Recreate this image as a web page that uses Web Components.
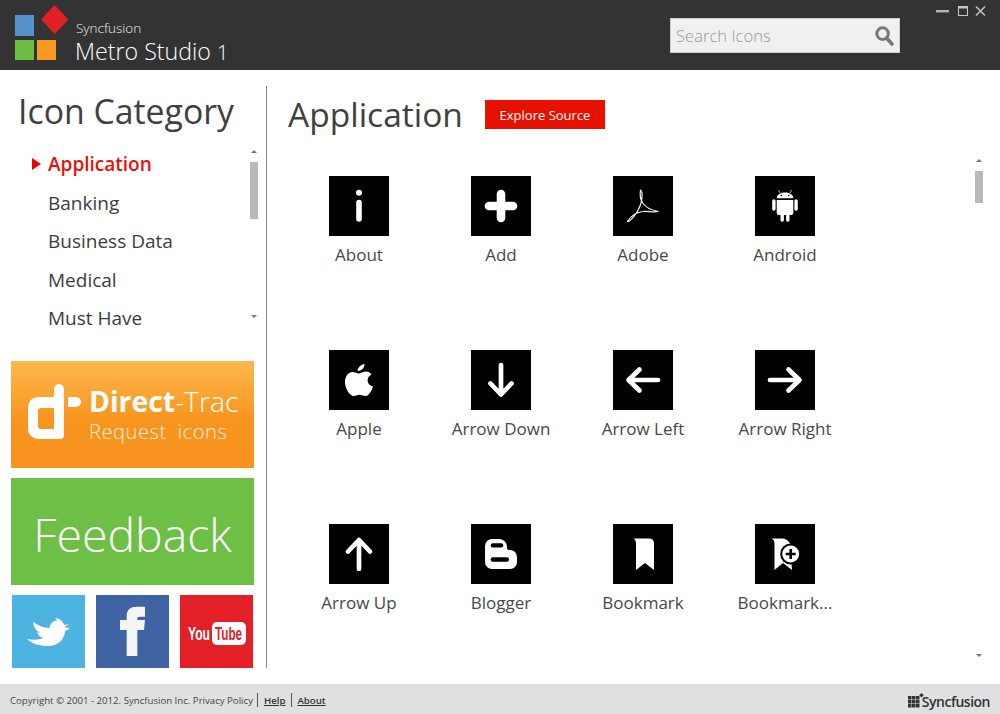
<!DOCTYPE html>
<html>
<head>
<meta charset="utf-8">
<title>Metro Studio</title>
<style>
  html, body { margin: 0; padding: 0; background: #fff; }
  body { font-family: "Open Sans", "Noto Sans", sans-serif; color: #3c3c3c; }
</style>
</head>
<body>
<metro-app></metro-app>

<script>
class VScroll extends HTMLElement {
  connectedCallback() {
    const root = this.shadowRoot || this.attachShadow({ mode: "open" });
    const top = this.getAttribute("thumb-top") || 0;
    const size = this.getAttribute("thumb-size") || 40;
    root.innerHTML = `
      <style>
        :host { display: flex; flex-direction: column; width: 8px; align-items: center; justify-content: space-between; }
        .up, .down { width: 0; height: 0; border-left: 3px solid transparent; border-right: 3px solid transparent; }
        .up { border-bottom: 3px solid #777; }
        .down { border-top: 3px solid #777; }
        .track { flex: 1; width: 8px; }
        .thumb { width: 8px; background: #b9b9b9; margin-top: ${top}px; height: ${size}px; }
      </style>
      <div class="up"></div>
      <div class="track"><div class="thumb"></div></div>
      <div class="down"></div>
    `;
  }
}

class WindowControls extends HTMLElement {
  connectedCallback() {
    const root = this.shadowRoot || this.attachShadow({ mode: "open" });
    root.innerHTML = `
      <style>
        :host { display: block; line-height: 0; }
      </style>
      <svg width="52" height="14" viewBox="0 0 52 14">
        <rect x="0" y="5" width="13" height="2.4" fill="#b5b5b5"/>
        <rect x="22.5" y="1.5" width="9" height="9" fill="none" stroke="#c8c8c8" stroke-width="1"/>
        <rect x="22" y="1" width="10" height="2.5" fill="#c8c8c8"/>
        <path d="M40 1.5 L49 10.5 M49 1.5 L40 10.5" stroke="#c0c0c0" stroke-width="1.6" fill="none"/>
      </svg>
    `;
  }
}

class SearchBox extends HTMLElement {
  connectedCallback() {
    const root = this.shadowRoot || this.attachShadow({ mode: "open" });
    root.innerHTML = `
      <style>
        :host { display: flex; align-items: center; justify-content: space-between; box-sizing: border-box; width: 230px; height: 35px; background: #f0f0f0; border: 1px solid #cfcfcf; padding: 0 5px 0 5px; }
        span { font-size: 16.6px; font-weight: 300; color: #9a9a9a; }
        svg { display: block; }
      </style>
      <span>Search Icons</span>
      <svg width="19" height="20" viewBox="0 0 19 20">
        <circle cx="7.6" cy="7.6" r="5.8" fill="none" stroke="#777" stroke-width="3"/>
        <path d="M11.6 12 L17 18" stroke="#777" stroke-width="3.6" stroke-linecap="round"/>
      </svg>
    `;
  }
}

class AppHeader extends HTMLElement {
  connectedCallback() {
    const root = this.shadowRoot || this.attachShadow({ mode: "open" });
    root.innerHTML = `
      <style>
        :host { display: flex; height: 70px; background: #333; color: #fff; position: relative; }
        .logo { display: block; margin: 5px 0 0 15px; flex: none; }
        .brand { margin-left: 6px; display: flex; flex-direction: column; padding-top: 19px; }
        .company { font-size: 13.5px; line-height: 18px; color: #eee; font-weight: 300; padding-left: 1px; }
        .product { font-size: 23.2px; line-height: 28px; font-weight: 300; white-space: nowrap; }
        .product small { font-size: 20px; }
        .spacer { flex: 1; }
        search-box { margin: 18px 100px 0 0; }
        window-controls { position: absolute; top: 5px; right: 12px; }
      </style>
      <svg class="logo" width="54" height="56" viewBox="15 5 54 56">
        <rect x="15" y="15" width="19" height="21" fill="#5591cd"/>
        <rect x="15" y="40" width="19" height="20" fill="#6fbe44"/>
        <rect x="37" y="40" width="19" height="20" fill="#f59b23"/>
        <path d="M54.5 5 L68.5 19.5 L54.5 34 L41 19.5 Z" fill="#e21f26"/>
      </svg>
      <div class="brand">
        <div class="company">Syncfusion</div>
        <div class="product">Metro Studio <small>1</small></div>
      </div>
      <div class="spacer"></div>
      <search-box></search-box>
      <window-controls></window-controls>
    `;
  }
}

class CategoryList extends HTMLElement {
  connectedCallback() {
    const root = this.shadowRoot || this.attachShadow({ mode: "open" });
    const items = ["Application", "Banking", "Business Data", "Medical", "Must Have"];
    root.innerHTML = `
      <style>
        :host { display: flex; height: 180px; overflow: hidden; }
        ul { list-style: none; margin: 0; padding: 0 0 0 48px; flex: 1; }
        li { height: 38.5px; line-height: 38.5px; font-size: 19px; position: relative; color: #3c3c3c; white-space: nowrap; }
        li.on { color: #e8100c; font-weight: 600; }
        li.on::before { content: ""; position: absolute; left: -16px; top: 13px; border-left: 9px solid #f00000; border-top: 6px solid transparent; border-bottom: 6px solid transparent; }
        v-scroll { margin: 5px 8px 7px 0; }
      </style>
      <ul>${items.map((t, i) => `<li class="${i === 0 ? "on" : ""}">${t}</li>`).join("")}</ul>
      <v-scroll thumb-top="9" thumb-size="57"></v-scroll>
    `;
  }
}

class DirectTrac extends HTMLElement {
  connectedCallback() {
    const root = this.shadowRoot || this.attachShadow({ mode: "open" });
    root.innerHTML = `
      <style>
        :host { display: flex; align-items: center; height: 107px; background: linear-gradient(#fdb94c, #f8951f 55%, #f7931e); color: #fff; }
        svg { display: block; margin: -6px 0 0 17px; flex: none; }
        .txt { margin: -2px 0 0 8px; }
        .big { font-size: 28.3px; line-height: 36px; font-weight: 700; white-space: nowrap; }
        .big span { font-weight: 300; }
        .sub { font-size: 20.2px; line-height: 25px; font-weight: 300; letter-spacing: .5px; word-spacing: 5px; opacity: .85; white-space: nowrap; }
      </style>
      <svg width="53" height="55" viewBox="0 0 53 55">
        <path d="M26 5 a5 5 0 0 1 10 0 V51 a4 4 0 0 1 -4 4 H10 A10 10 0 0 1 0 45 V23 A10 10 0 0 1 10 13 H26 Z M26 24 H13 a3 3 0 0 0 -3 3 V42 a3 3 0 0 0 3 3 H26 Z" fill="#fff" fill-rule="evenodd"/>
        <path d="M40 13 H48 a5 5 0 0 1 0 10 H40 Z" fill="#fff"/>
      </svg>
      <div class="txt">
        <div class="big">Direct<span>-Trac</span></div>
        <div class="sub">Request icons</div>
      </div>
    `;
  }
}

class FeedbackBanner extends HTMLElement {
  connectedCallback() {
    const root = this.shadowRoot || this.attachShadow({ mode: "open" });
    root.innerHTML = `
      <style>
        :host { display: flex; align-items: center; justify-content: center; box-sizing: border-box; height: 107px; padding-top: 5px; background: #6ebf45; color: #fff; font-size: 46.4px; font-weight: 300; }
      </style>
      Feedback
    `;
  }
}

class SocialLinks extends HTMLElement {
  connectedCallback() {
    const root = this.shadowRoot || this.attachShadow({ mode: "open" });
    root.innerHTML = `
      <style>
        :host { display: flex; gap: 11px; padding-left: 1px; }
        svg { display: block; }
      </style>
      <svg width="73" height="73" viewBox="0 0 73 73">
        <rect width="73" height="73" fill="#4db3e1"/>
        <path d="M58 33.5 L52.500 32 L57 29 L52 30 C51 26 47 23 43 23 L45.500 25.500 C41 25 38 29 37.500 33 C31 33 26 30 21 27 C21.500 32 24 36 28 37.500 L25 37.500 C26 40 28 42 31 43 C27 45 21 45 15 44 C21 49 27 51 36 51 C47 51 53 43 53 36 Z" fill="#fff"/>
      </svg>
      <svg width="73" height="73" viewBox="0 0 73 73">
        <rect width="73" height="73" fill="#4064a3"/>
        <path d="M30.7 61 V35 H24 V25 H30.7 V21 C30.7 15 34 11.7 41 11.7 H49 V21.7 H44 C42 21.7 41.3 22.5 41.3 24 V25 H49 L48 35 H41.3 V61 Z" fill="#f4f4f6"/>
      </svg>
      <svg width="73" height="73" viewBox="0 0 73 73">
        <rect width="73" height="73" fill="#e32025"/>
        <text transform="translate(8 45) scale(.64 1)" font-family="Liberation Sans" font-weight="700" font-size="19" fill="#fff">You</text>
        <rect x="32" y="27" width="34" height="23" rx="5" fill="#fff"/>
        <text transform="translate(35 45) scale(.617 1)" font-family="Liberation Sans" font-weight="700" font-size="19" fill="#e32025">Tube</text>
      </svg>
    `;
  }
}

class SidePanel extends HTMLElement {
  connectedCallback() {
    const root = this.shadowRoot || this.attachShadow({ mode: "open" });
    root.innerHTML = `
      <style>
        :host { display: flex; flex-direction: column; flex: none; box-sizing: border-box; width: 267px; border-right: 1px solid #8a8a8a; }
        h1 { margin: -1px 0 8px 18px; font-size: 33.8px; line-height: 52px; font-weight: 400; color: #404040; white-space: nowrap; }
        .banners { display: flex; flex-direction: column; gap: 10px; margin: 36px 12px 0 11px; }
      </style>
      <h1>Icon Category</h1>
      <category-list></category-list>
      <div class="banners">
        <direct-trac></direct-trac>
        <feedback-banner></feedback-banner>
        <social-links></social-links>
      </div>
    `;
  }
}

class IconTile extends HTMLElement {
  connectedCallback() {
    const root = this.shadowRoot || this.attachShadow({ mode: "open" });
    root.innerHTML = `
      <style>
        :host { display: flex; flex-direction: column; align-items: center; height: 100px; }
        .box { width: 60px; height: 60px; background: #000; flex: none; }
        ::slotted(svg) { display: block; width: 60px; height: 60px; }
        .label { margin-top: 7px; font-size: 17px; line-height: 24px; color: #484848; white-space: nowrap; }
      </style>
      <div class="box"><slot></slot></div>
      <div class="label">${this.getAttribute("label") || ""}</div>
    `;
  }
}

class IconGrid extends HTMLElement {
  connectedCallback() {
    const root = this.shadowRoot || this.attachShadow({ mode: "open" });
    root.innerHTML = `
      <style>
        :host { display: grid; grid-template-columns: repeat(4, 142px); row-gap: 74px; align-content: start; margin-top: 32px; }
      </style>
      <slot></slot>
    `;
  }
}

class ContentPanel extends HTMLElement {
  connectedCallback() {
    const root = this.shadowRoot || this.attachShadow({ mode: "open" });
    root.innerHTML = `
      <style>
        :host { display: flex; flex-direction: column; flex: 1; min-width: 0; padding-left: 21px; }
        .head { display: flex; align-items: center; height: 58px; flex: none; }
        h2 { margin: -2px 0 0; font-size: 33.5px; font-weight: 400; line-height: 58px; color: #404040; width: 197px; white-space: nowrap; }
        button { width: 120px; height: 29px; margin-top: -1px; border: 0; padding: 0; background: #e81100; color: #fff; font: 400 13px "Open Sans", sans-serif; }
        .body { display: flex; justify-content: space-between; flex: 1; min-height: 0; }
        v-scroll { height: 498px; margin: 15px 17px 0 0; }
      </style>
      <div class="head">
        <h2>Application</h2>
        <button>Explore Source</button>
      </div>
      <div class="body">
        <icon-grid><slot></slot></icon-grid>
        <v-scroll thumb-top="9" thumb-size="32"></v-scroll>
      </div>
    `;
  }
}

class AppFooter extends HTMLElement {
  connectedCallback() {
    const root = this.shadowRoot || this.attachShadow({ mode: "open" });
    root.innerHTML = `
      <style>
        :host { display: flex; align-items: center; justify-content: space-between; box-sizing: border-box; height: 30px; flex: none; background: #e0e0e0; padding: 2px 10px 0 10px; font-size: 9.65px; color: #444; }
        .links { display: flex; align-items: center; white-space: nowrap; }
        a { color: #333; text-decoration: underline; font-weight: 600; padding: 0 5.5px; }
        .sep { width: 1px; height: 14px; background: #555; }
        .first { margin-left: 4.5px; }
        .logo { display: flex; align-items: flex-end; margin-top: 1px; }
        .logo svg { display: block; margin-right: -2px; margin-bottom: 1px; }
        .logo span { font-size: 14px; line-height: 14px; font-weight: 600; color: #333; letter-spacing: -.5px; }
      </style>
      <div class="links">
        <span>Copyright © 2001 - 2012. Syncfusion Inc. Privacy Policy</span>
        <span class="sep first"></span><a>Help</a><span class="sep"></span><a>About</a>
      </div>
      <div class="logo">
        <svg width="16" height="15" viewBox="0 0 16 15">
          <path d="M0 3h3.500v3.500H0zM4 3h3.500v3.500H4zM8 3h3.500v3.500H8zM0 7h3.500v3.500H0zM4 7h3.500v3.500H4zM8 7h3.500v3.500H8zM0 11h3.500v3.500H0zM4 11h3.500v3.500H4zM8 11h3.500v3.500H8z" fill="#333"/>
          <path d="M13.500 0 L15.800 2.300 L13.500 4.600 L11.200 2.300 Z" fill="#333"/>
        </svg>
        <span>Syncfusion</span>
      </div>
    `;
  }
}

class MetroApp extends HTMLElement {
  connectedCallback() {
    const root = this.shadowRoot || this.attachShadow({ mode: "open" });
    root.innerHTML = `
      <style>
        :host { display: flex; flex-direction: column; width: 1000px; height: 714px; overflow: hidden; }
        main { display: flex; flex: 1; min-height: 0; padding: 16px 0; }
      </style>
      <app-header></app-header>
      <main>
        <side-panel></side-panel>
        <content-panel>
          <icon-tile label="About"><svg viewBox="0 0 60 60"><circle cx="30" cy="16.7" r="3" fill="#fff"/><path d="M30 26.500V43" stroke="#fff" stroke-width="5.600" stroke-linecap="round"/></svg></icon-tile>
          <icon-tile label="Add"><svg viewBox="0 0 60 60"><path d="M30 18V42M18 30H42" stroke="#fff" stroke-width="8.600" stroke-linecap="round"/></svg></icon-tile>
          <icon-tile label="Adobe"><svg viewBox="0 0 60 60"><path d="M27.500 14 C26.500 20 27.500 24 30 27.500 C32.500 31 38 34 45.500 35.500 C41 36.500 34 35 30 35.500 C24 36 18 40 14.500 45.500 C15.500 47 21 41 24 36 C27 31 29.500 24 29 18 C29 16 28 14 27.500 14 Z" fill="none" stroke="#f2f2f2" stroke-width="1.200"/></svg></icon-tile>
          <icon-tile label="Android"><svg viewBox="0 0 60 60" fill="#fff"><path d="M21.700 22.300 C21.700 19 25 16.500 30 16.500 C35 16.500 38.300 19 38.300 22.300 Z"/><path d="M25 17 L23.500 14 M35 17 L36.500 14" stroke="#fff" stroke-width=".7"/><circle cx="26.300" cy="19.500" r=".8" fill="#000"/><circle cx="33.700" cy="19.500" r=".8" fill="#000"/><path d="M21.700 24 H38.300 V37 a2 2 0 0 1 -2 2 H34.500 V44 a1.700 1.700 0 0 1 -3.400 0 V39 H28.900 V44 a1.700 1.700 0 0 1 -3.400 0 V39 H23.700 a2 2 0 0 1 -2 -2 Z"/><rect x="17.200" y="23.300" width="3.400" height="11.400" rx="1.700"/><rect x="39.400" y="23.300" width="3.400" height="11.400" rx="1.700"/></svg></icon-tile>
          <icon-tile label="Apple"><svg viewBox="0 0 60 60" fill="#fff"><path d="M28.500 21 C29 17 32 14.500 35.500 14 C35.500 18 32.500 21 28.500 21 Z"/><path d="M23.500 22 C26 22 28 23.500 30 23.500 C32 23.500 34 21.600 37 21.600 C39.300 21.600 41.300 22.600 42.500 24.500 C39.800 26 38.600 28 38.600 30.400 C38.600 33.400 40.600 35.400 44 36.400 C42.600 41 39.500 46 36.500 46 C34.300 46 33 44.700 30.600 44.700 C28 44.700 27 46 24.800 46 C21 46 16 39 16 32 C16 26 19.500 22 23.500 22 Z"/></svg></icon-tile>
          <icon-tile label="Arrow Down"><svg viewBox="0 0 60 60"><path d="M30 15V44M19.500 33.500L30 44.500L40.500 33.500" fill="none" stroke="#fff" stroke-width="4.700" stroke-linecap="round" stroke-linejoin="round"/></svg></icon-tile>
          <icon-tile label="Arrow Left"><svg viewBox="0 0 60 60"><path d="M45 30H16M26.500 19.500L15.500 30L26.500 40.500" fill="none" stroke="#fff" stroke-width="4.700" stroke-linecap="round" stroke-linejoin="round"/></svg></icon-tile>
          <icon-tile label="Arrow Right"><svg viewBox="0 0 60 60"><path d="M15 30H44M33.500 19.500L44.500 30L33.500 40.500" fill="none" stroke="#fff" stroke-width="4.700" stroke-linecap="round" stroke-linejoin="round"/></svg></icon-tile>
          <icon-tile label="Arrow Up"><svg viewBox="0 0 60 60"><path d="M30 45V16.500M19 27.500L30 16L41 27.500" fill="none" stroke="#fff" stroke-width="4.700" stroke-linecap="round" stroke-linejoin="round"/></svg></icon-tile>
          <icon-tile label="Blogger"><svg viewBox="0 0 60 60"><path d="M21 15 H28 a8 8 0 0 1 8 8 v1 a2 2 0 0 0 2 2 H39 a7 7 0 0 1 7 7 v5 a7 7 0 0 1 -7 7 H21 a7 7 0 0 1 -7 -7 V22 a7 7 0 0 1 7 -7 Z" fill="#fff"/><rect x="19.700" y="19.300" width="12.600" height="4.200" rx="2.100" fill="#000"/><rect x="19.700" y="33.300" width="18.300" height="4.400" rx="2.200" fill="#000"/></svg></icon-tile>
          <icon-tile label="Bookmark"><svg viewBox="0 0 60 60"><path d="M20.500 14.500 H36 q5 0 5 5 V46 L32 39 L23 46 V20 q0 -4.500 -2.500 -5.500 Z" fill="#fff"/></svg></icon-tile>
          <icon-tile label="Bookmark..."><svg viewBox="0 0 60 60"><path d="M16.500 14.500 H27 q5 0 8 5 L37 46 L28 39 L19.500 46 V20 q0 -4.500 -3 -5.500 Z" fill="#fff"/><circle cx="35.700" cy="30" r="10.500" fill="#000"/><circle cx="35.700" cy="30" r="8.500" fill="#fff"/><path d="M35.700 25V35M30.700 30H40.700" stroke="#000" stroke-width="2.600"/></svg></icon-tile>
        </content-panel>
      </main>
      <app-footer></app-footer>
    `;
  }
}

customElements.define("v-scroll", VScroll);
customElements.define("window-controls", WindowControls);
customElements.define("search-box", SearchBox);
customElements.define("app-header", AppHeader);
customElements.define("category-list", CategoryList);
customElements.define("direct-trac", DirectTrac);
customElements.define("feedback-banner", FeedbackBanner);
customElements.define("social-links", SocialLinks);
customElements.define("side-panel", SidePanel);
customElements.define("icon-tile", IconTile);
customElements.define("icon-grid", IconGrid);
customElements.define("content-panel", ContentPanel);
customElements.define("app-footer", AppFooter);
customElements.define("metro-app", MetroApp);
</script>
</body>
</html>
